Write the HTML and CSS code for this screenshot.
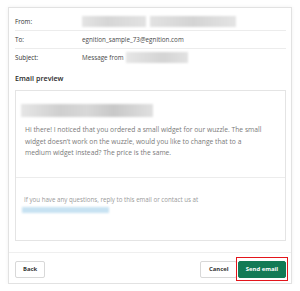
FILE: index.html
```html
<!DOCTYPE html>
<html lang="en">
<head>
<meta charset="utf-8">
<title>Email preview</title>
<link rel="stylesheet" href="styles.css">
</head>
<body>
<div class="card">
  <div class="content">
    <div class="meta">
      <div class="row"><span class="label">From:</span><span class="value"><span class="blur b1"></span><span class="blur b2"></span></span></div>
      <div class="row"><span class="label">To:</span><span class="value">egnition_sample_73@egnition.com</span></div>
      <div class="row last"><span class="label">Subject:</span><span class="value">Message from <span class="blur b3"></span></span></div>
    </div>
    <h2 class="title">Email preview</h2>
    <div class="preview">
      <div class="pbody">
        <div class="blur greet"></div>
        <p class="msg">Hi there! I noticed that you ordered a small widget for our wuzzle. The small widget doesn’t work on the wuzzle, would you like to change that to a<br>medium widget instead? The price is the same.</p>
      </div>
      <div class="pfoot">
        <p class="note">If you have any questions, reply to this email or contact us at</p>
        <div class="blur link"></div>
      </div>
    </div>
  </div>
  <div class="actions">
    <button class="btn">Back</button>
    <span class="spacer"></span>
    <button class="btn cancel">Cancel</button>
    <button class="btn primary highlighted">Send email</button>
  </div>
</div>
</body>
</html>
```

FILE: styles.css
```css
* { box-sizing: border-box; }
html, body { margin: 0; padding: 0; background: #fff; }
body {
  font-family: "Open Sans", "Noto Sans", "Liberation Sans", sans-serif;
  color: #333;
}
.card {
  margin: 7px 8px 0 8px;
  width: 284px;
  height: 277px;
  border: 1px solid #e2e2e2;
  box-shadow: 0 0 4px rgba(0,0,0,0.06);
  display: flex;
  flex-direction: column;
}
.content {
  padding: 5px 5px 0 6px;
}
.row {
  display: flex;
  align-items: center;
  height: 18px;
  border-bottom: 1px solid #ececec;
  font-size: 6.3px;
}
.row.last { border-bottom: none; height: 17px; }
.label {
  width: 67px;
  color: #333;
  font-weight: 500;
}
.value {
  color: #4a4a4a;
  display: flex;
  align-items: center;
}
.blur {
  display: inline-block;
  background: #dcdcdc;
  filter: blur(1.2px);
}
.b1 { width: 64px; height: 11px; background: linear-gradient(90deg, #e4e4e4, #d6d6d6 40%, #e2e2e2); }
.b2 { width: 86px; height: 11px; margin-left: 4px; background: linear-gradient(90deg, #e2e2e2, #d4d4d4 50%, #e4e4e4); }
.b3 { width: 62px; height: 11px; margin-left: 2px; background: linear-gradient(90deg, #e6e6e6, #d4d4d4 60%, #e2e2e2); }
.title {
  margin: 6px 0 6px 0;
  font-size: 7.2px;
  line-height: 12px;
  font-weight: 600;
  color: #2a2a2a;
}
.preview {
  border: 1px solid #e4e4e4;
  height: 151px;
  display: flex;
  flex-direction: column;
}
.pbody {
  padding: 13px 9px 18px 9px;
  border-bottom: 1px solid #ececec;
}
.greet {
  display: block;
  width: 132px;
  height: 13px;
  margin-left: -4px;
  background: linear-gradient(90deg, #e6e6e6 0, #cfcfcf 30%, #d8d8d8 50%, #c8c8c8 70%, #e0e0e0 100%);
}
.msg {
  margin: 7px 0 0 0;
  font-size: 6.72px;
  line-height: 11.5px;
  color: #7a7a7a;
}
.pfoot {
  padding: 16px 8px 0 8px;
}
.note {
  margin: 0;
  font-size: 6.2px;
  line-height: 11px;
  color: #9a9a9a;
}
.link {
  display: block;
  width: 87px;
  height: 6px;
  margin-left: -2px;
  margin-top: 2px;
  background: #c7e2f2;
}
.actions {
  margin-top: auto;
  border-top: 1px solid #efefef;
  padding: 8px 5px 5px 6px;
  display: flex;
  align-items: center;
  gap: 1px;
}
.spacer { flex: 1; }
.btn {
  font-family: inherit;
  font-size: 5.9px;
  font-weight: 700;
  height: 17px;
  padding: 0 7px;
  border: 1px solid #d8d8d8;
  border-radius: 2px;
  background: #fff;
  color: #333;
  line-height: 15px;
}
.btn.cancel { padding: 0 8px; width: 37px; }
.btn.primary {
  background: #137a55;
  border-color: #137a55;
  color: #fff;
  width: 48px;
  padding: 0;
}
.highlighted { position: relative; }
.highlighted::after {
  content: "";
  position: absolute;
  top: -5px;
  bottom: -4px;
  left: -3px;
  right: -3px;
  border: 1.5px solid #e3151b;
  pointer-events: none;
}
```
